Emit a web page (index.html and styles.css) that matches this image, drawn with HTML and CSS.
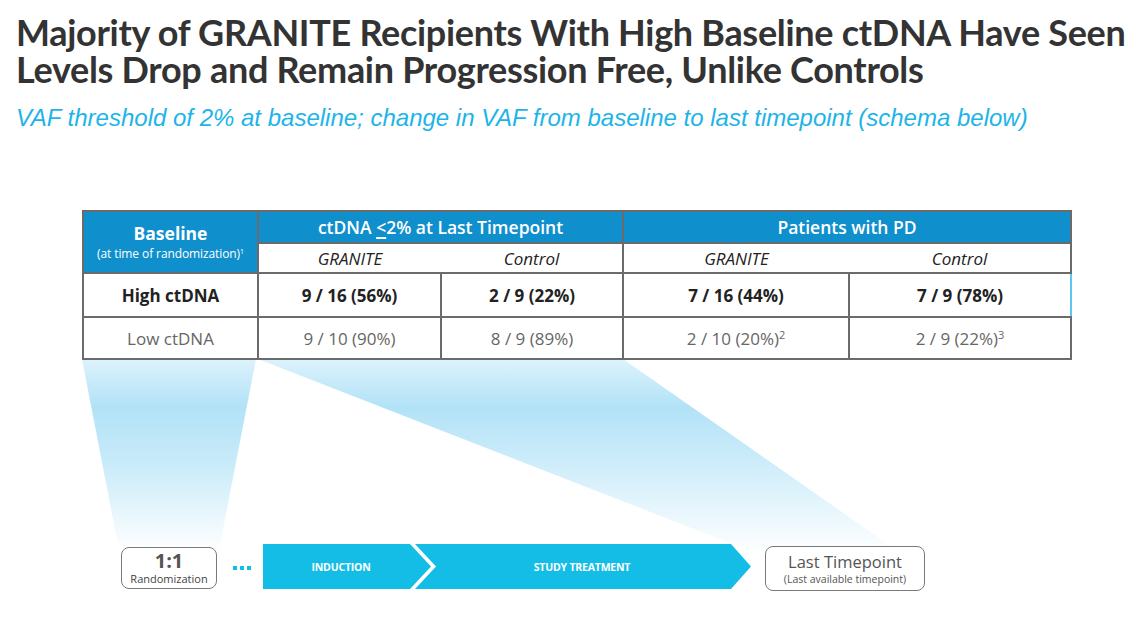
FILE: index.html
```html
<!DOCTYPE html>
<html lang="en">
<head>
<meta charset="utf-8">
<title>GRANITE ctDNA</title>
<link rel="stylesheet" href="styles.css">
</head>
<body>
<div class="slide">
  <header class="head">
    <h1 class="title">Majority of GRANITE Recipients With High Baseline ctDNA Have Seen<br>Levels Drop and Remain Progression Free, Unlike Controls</h1>
    <p class="subtitle">VAF threshold of 2% at baseline; change in VAF from baseline to last timepoint (schema below)</p>
  </header>

  <section class="figure">
    <svg class="funnels" width="1128" height="360" viewBox="0 0 1128 360" aria-hidden="true">
      <defs>
        <linearGradient id="fadeL" x1="0" y1="148" x2="0" y2="342" gradientUnits="userSpaceOnUse">
          <stop offset="0" stop-color="#ddf3fc"/>
          <stop offset="0.25" stop-color="#b2e2f7"/>
          <stop offset="0.55" stop-color="#c9ebf9"/>
          <stop offset="1" stop-color="#ffffff"/>
        </linearGradient>
        <linearGradient id="fadeR" x1="0" y1="148" x2="0" y2="344" gradientUnits="userSpaceOnUse">
          <stop offset="0" stop-color="#ddf3fc"/>
          <stop offset="0.25" stop-color="#b2e2f7"/>
          <stop offset="0.55" stop-color="#cfedfa"/>
          <stop offset="1" stop-color="#ffffff"/>
        </linearGradient>
      </defs>
      <polygon points="82,149 256,149 219,340 119,340" fill="url(#fadeL)"/>
      <polygon points="258,149 623,149 902,344 758,344" fill="url(#fadeR)"/>
    </svg>

    <table class="data">
      <colgroup>
        <col class="c1"><col class="c2"><col class="c3"><col class="c4"><col class="c5">
      </colgroup>
      <tr class="hrow">
        <th class="base" rowspan="2"><span class="base-main">Baseline</span><span class="base-sub">(at time of randomization)<sup>1</sup></span></th>
        <th class="grp" colspan="2">ctDNA <u>&lt;</u>2% at Last Timepoint</th>
        <th class="grp" colspan="2">Patients with PD</th>
      </tr>
      <tr class="srow">
        <td class="arm left">GRANITE</td>
        <td class="arm right">Control</td>
        <td class="arm left">GRANITE</td>
        <td class="arm right">Control</td>
      </tr>
      <tr class="high">
        <td>High ctDNA</td>
        <td>9 / 16 (56%)</td>
        <td>2 / 9 (22%)</td>
        <td>7 / 16 (44%)</td>
        <td class="edge">7 / 9 (78%)</td>
      </tr>
      <tr class="low">
        <td>Low ctDNA</td>
        <td>9 / 10 (90%)</td>
        <td>8 / 9 (89%)</td>
        <td>2 / 10 (20%)<sup>2</sup></td>
        <td>2 / 9 (22%)<sup>3</sup></td>
      </tr>
    </table>

    <div class="timeline">
      <div class="box rand">
        <span class="rand-main">1:1</span>
        <span class="rand-sub">Randomization</span>
      </div>
      <div class="dots"><i></i><i></i><i></i></div>
      <svg class="arrows" width="488" height="45" viewBox="0 0 488 45">
        <polygon points="0,0 147,0 168,22.5 147,45 0,45" fill="#14bde6"/>
        <polygon points="152,0 468,0 488,22.5 468,45 152,45 173,22.5" fill="#14bde6"/>
        <text x="78" y="27" class="arrow-label" text-anchor="middle">INDUCTION</text>
        <text x="319" y="26.5" class="arrow-label" text-anchor="middle">STUDY TREATMENT</text>
      </svg>
      <div class="box last">
        <span class="last-main">Last Timepoint</span>
        <span class="last-sub">(Last available timepoint)</span>
      </div>
    </div>
  </section>
</div>
</body>
</html>
```

FILE: styles.css
```css
* { box-sizing: border-box; }

html, body {
  margin: 0;
  padding: 0;
  background: #ffffff;
}

.slide {
  width: 1128px;
  height: 618px;
  overflow: hidden;
  font-family: "Open Sans", Lato, sans-serif;
}

.head {
  padding-left: 16px;
}

.title {
  margin: 14px 0 0 0;
  font-family: Lato, "Open Sans", sans-serif;
  font-weight: 700;
  font-size: 36px;
  line-height: 37px;
  color: #333333;
  letter-spacing: -0.3px;
  white-space: nowrap;
}

.subtitle {
  margin: 16px 0 0 0;
  font-family: "Liberation Sans", Arial, sans-serif;
  font-style: italic;
  font-size: 24px;
  line-height: 28px;
  color: #1db4e8;
  white-space: nowrap;
}

/* figure: table + schema */
.figure {
  position: relative;
  margin-top: 78px;
  height: 406px;
}

.funnels {
  position: absolute;
  left: 0;
  top: 0;
  z-index: 0;
}

.data {
  position: relative;
  z-index: 1;
  margin-left: 82px;
  width: 988px;
  table-layout: fixed;
  border-collapse: collapse;
  background: #ffffff;
  font-family: "Open Sans", Lato, sans-serif;
  font-size: 17px;
  text-align: center;
}

.c1 { width: 175px; }
.c2 { width: 183px; }
.c3 { width: 182px; }
.c4 { width: 226px; }
.c5 { width: 222px; }

.data th,
.data td {
  border: 2px solid #6b6b6b;
  padding: 0;
  vertical-align: middle;
}

.hrow { height: 32px; }
.srow { height: 30px; }
.high { height: 44px; }
.low { height: 42px; }

.data th {
  background: #108fcd;
  color: #ffffff;
}

.grp {
  font-weight: 600;
  font-size: 17.5px;
  border-bottom: none;
  padding-top: 1px;
}

.grp u {
  text-decoration-thickness: 1.5px;
  text-underline-offset: 3px;
}

.base {
  padding-top: 3px;
}

.base-main {
  display: block;
  font-weight: 700;
  font-size: 17.5px;
  line-height: 22px;
}

.base-sub {
  display: block;
  font-weight: 400;
  font-size: 12px;
  line-height: 16px;
  letter-spacing: -0.1px;
}

.base-sub sup {
  font-size: 7px;
  vertical-align: 4px;
}

.srow td {
  border-top: none;
  font-style: italic;
  color: #222222;
  padding-top: 1px;
}

.srow td.left { border-right: none; }
.srow td.right { border-left: none; }

.high td {
  font-weight: 700;
  color: #222222;
}

.high td.edge {
  border-right-color: #5ec6f2;
}

.low td {
  font-weight: 400;
  color: #666666;
}

.low sup {
  font-size: 11px;
  vertical-align: 6px;
  line-height: 0;
}

/* timeline */
.timeline {
  position: relative;
  z-index: 1;
  display: flex;
  align-items: center;
  margin-top: 184px;
  padding-left: 121px;
  height: 48px;
}

.box {
  display: flex;
  flex-direction: column;
  align-items: center;
  justify-content: center;
  border: 1.5px solid #7a7a7a;
  border-radius: 8px;
  background: #ffffff;
  color: #555555;
}

.rand {
  width: 96px;
  height: 42px;
  padding-bottom: 1px;
}

.rand-main {
  font-weight: 700;
  font-size: 20px;
  line-height: 23px;
  color: #555555;
}

.rand-sub {
  font-size: 11px;
  line-height: 14px;
  color: #444444;
}

.dots {
  display: flex;
  gap: 3px;
  margin-left: 16px;
  margin-right: 12px;
}

.dots i {
  display: block;
  width: 4px;
  height: 4px;
  background: #14bde6;
}

.arrows {
  display: block;
  margin-top: -3px;
}

.arrow-label {
  font-family: "Open Sans", Lato, sans-serif;
  font-weight: 700;
  font-size: 10.5px;
  letter-spacing: -0.2px;
  fill: #ffffff;
}

.last {
  width: 160px;
  height: 45px;
  margin-left: 14px;
}

.last-main {
  font-size: 16.5px;
  line-height: 21px;
  color: #555555;
}

.last-sub {
  font-size: 10.5px;
  line-height: 14px;
  color: #555555;
}
```
